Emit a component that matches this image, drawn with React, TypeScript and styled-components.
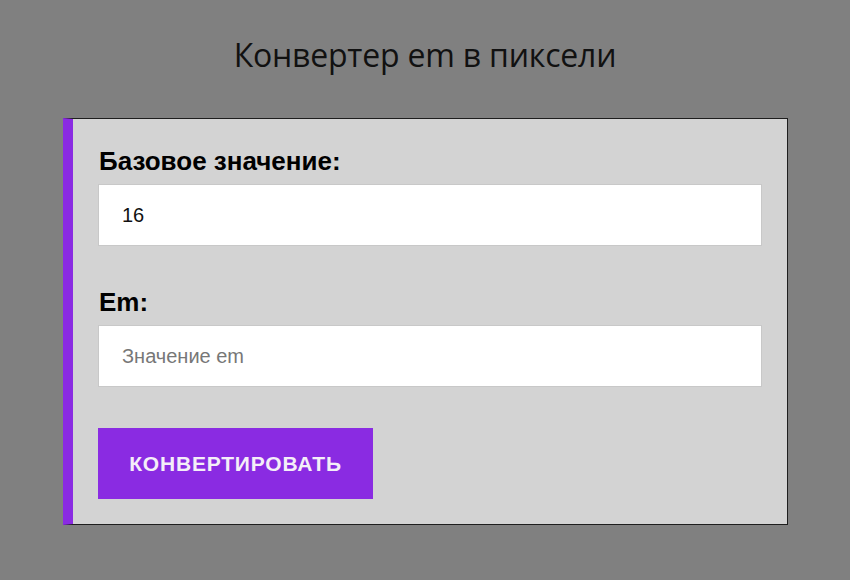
import React from "react";
import styled, { createGlobalStyle } from "styled-components";

const Global = createGlobalStyle`
  html, body { margin: 0; padding: 0; background: #808080; }
  body { font-family: "Liberation Sans", Arial, sans-serif; }
  * { box-sizing: border-box; }
`;

const Page = styled.div`
  width: 850px;
  min-height: 580px;
  background: #808080;
  padding-top: 33px;
  display: flex;
  flex-direction: column;
  align-items: center;
`;

const Title = styled.h1`
  margin: 0;
  font-family: "Open Sans", "Noto Sans", sans-serif;
  font-weight: 400;
  font-size: 32px;
  line-height: 44px;
  color: #111;
  letter-spacing: -0.2px;
`;

const Card = styled.form`
  margin-top: 41px;
  align-self: flex-start;
  margin-left: 63px;
  width: 725px;
  background: #d3d3d3;
  border: 1px solid #1e1e1e;
  border-left: 10px solid #8a2be2;
  padding: 27px 25px 25px 25px;
  display: flex;
  flex-direction: column;
  align-items: flex-start;
`;

const Field = styled.div<{ $gap: number }>`
  width: 100%;
  display: flex;
  flex-direction: column;
  margin-bottom: ${(p) => p.$gap}px;
`;

const Label = styled.label`
  font-weight: 700;
  font-size: 26px;
  line-height: 30px;
  color: #000;
  margin-bottom: 8px;
  padding-left: 1px;
`;

const Input = styled.input`
  width: 100%;
  height: 62px;
  border: 1px solid #c8c8c8;
  background: #fff;
  padding: 0 23px;
  font-family: "Liberation Sans", Arial, sans-serif;
  font-size: 20px;
  color: #111;
  outline: none;
  &::placeholder { color: #777; }
`;

const Button = styled.button`
  width: 275px;
  height: 71px;
  border: none;
  background: #8a2be2;
  color: #f4eef8;
  font-family: "Liberation Sans", Arial, sans-serif;
  font-weight: 700;
  font-size: 21px;
  letter-spacing: 0.8px;
  text-transform: uppercase;
  cursor: pointer;
`;

export default function App() {
  return (
    <Page>
      <Global />
      <Title>Конвертер em в пиксели</Title>
      <Card onSubmit={(e) => e.preventDefault()}>
        <Field $gap={41}>
          <Label>Базовое значение:</Label>
          <Input defaultValue="16" />
        </Field>
        <Field $gap={41}>
          <Label>Em:</Label>
          <Input placeholder="Значение em" />
        </Field>
        <Button type="submit">Конвертировать</Button>
      </Card>
    </Page>
  );
}
